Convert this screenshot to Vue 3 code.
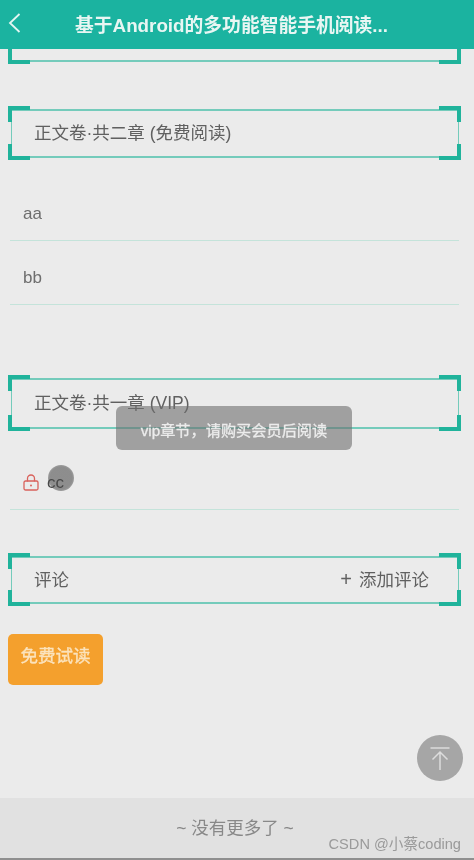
<script setup>
const boxCorners = ['tl', 'tr', 'bl', 'br']
const freeChapters = ['aa', 'bb']
</script>

<template>
  <div class="page">
    <header class="header">
      <svg class="back" width="14" height="20" viewBox="0 0 14 20">
        <path d="M11.5 1 L2 10 L11.5 19" fill="none" stroke="#e4f6f2" stroke-width="1.8" />
      </svg>
      <h1 class="title">基于Android的多功能智能手机阅读...</h1>
    </header>

    <main class="content">
      <section class="box box-clipped">
        <span v-for="c in boxCorners" :key="c" class="corner" :class="c"></span>
      </section>

      <section class="box box-free">
        <span v-for="c in boxCorners" :key="c" class="corner" :class="c"></span>
        <span class="box-label">正文卷·共二章 (免费阅读)</span>
      </section>
      <div class="rows">
        <div v-for="name in freeChapters" :key="name" class="row">{{ name }}</div>
      </div>

      <section class="box box-vip">
        <span v-for="c in boxCorners" :key="c" class="corner" :class="c"></span>
        <span class="box-label">正文卷·共一章 (VIP)</span>
      </section>
      <div class="rows rows-vip">
        <div class="row row-locked">
          <span class="touch"></span>
          <svg class="lock" width="16" height="17" viewBox="0 0 16 17">
            <path d="M4.5 7.5 V4.5 a3.5 3.5 0 0 1 7 0 V7.5" fill="none" stroke="#d9625c" stroke-width="1.3" />
            <rect x="1" y="7" width="14" height="9" rx="1.5" fill="none" stroke="#d9625c" stroke-width="1.3" />
            <circle cx="8" cy="11.5" r="1" fill="#d9625c" />
          </svg>
          <span class="locked-name">cc</span>
        </div>
      </div>

      <section class="box box-comment">
        <span v-for="c in boxCorners" :key="c" class="corner" :class="c"></span>
        <span class="box-label">评论</span>
        <span class="add"><span class="plus">+</span>添加评论</span>
      </section>

      <button class="trial">免费试读</button>

      <div class="toast">vip章节，请购买会员后阅读</div>
      <div class="totop">
        <svg width="24" height="26" viewBox="0 0 24 26">
          <path d="M2.5 3 H21.5 M12 25 V7 M4.5 14.5 L12 7 L19.5 14.5" fill="none" stroke="#dcdcdc" stroke-width="1.5" />
        </svg>
      </div>
    </main>

    <footer class="footer">
      <span class="end-note">~ 没有更多了 ~</span>
      <span class="mark">CSDN @小蔡coding</span>
    </footer>
  </div>
</template>

<style scoped>
.page {
  position: relative;
  width: 474px;
  height: 860px;
  display: flex;
  flex-direction: column;
  overflow: hidden;
  background: #ebebeb;
  color: #606060;
  font-family: "Liberation Sans", "Noto Sans CJK SC", sans-serif;
  font-size: 17.5px;
  filter: blur(0.55px);
}
.header {
  position: relative;
  z-index: 2;
  flex: none;
  box-sizing: border-box;
  height: 49px;
  padding: 0 0 3px 8px;
  background: #1bb3a0;
  display: flex;
  align-items: center;
}
.back {
  flex: none;
}
.title {
  margin: 0 0 0 53px;
  font-size: 18.8px;
  font-weight: 700;
  color: #e8f6f3;
  white-space: nowrap;
}
.content {
  position: relative;
  flex: 1;
  display: flex;
  flex-direction: column;
  align-items: flex-start;
}
.box {
  position: relative;
  flex: none;
  box-sizing: border-box;
  width: 453px;
  margin-left: 8px;
  padding: 0 32px 3px 26px;
  display: flex;
  align-items: center;
  justify-content: space-between;
}
.box::before {
  content: "";
  position: absolute;
  inset: 2.5px;
  border-style: solid;
  border-color: #74cbbb;
  border-width: 2px 1px;
}
.box-clipped {
  height: 56px;
  margin-top: -41px;
}
.box-free {
  height: 54px;
  margin-top: 42px;
}
.box-vip {
  height: 56px;
  margin-top: 70px;
}
.box-comment {
  height: 53px;
  margin-top: 43px;
}
.box-label,
.add {
  position: relative;
}
.plus {
  margin-right: 7px;
  font-size: 20px;
  font-weight: 400;
}
.corner {
  position: absolute;
  box-sizing: border-box;
  width: 22px;
  height: 16px;
  border: 0 solid #20b39b;
}
.tl { top: 0; left: 0; border-top-width: 4px; border-left-width: 4px; }
.tr { top: 0; right: 0; border-top-width: 4px; border-right-width: 4px; }
.bl { bottom: 0; left: 0; border-bottom-width: 4px; border-left-width: 4px; }
.br { bottom: 0; right: 0; border-bottom-width: 4px; border-right-width: 4px; }
.rows {
  flex: none;
  width: 449px;
  margin: 17px 0 0 10px;
}
.rows-vip {
  margin-top: 15px;
}
.row {
  box-sizing: border-box;
  height: 64px;
  padding: 27px 0 0 13px;
  line-height: 20px;
  font-size: 17px;
  color: #6e6e6e;
  border-bottom: 1.5px solid #c4e3da;
}
.row-locked {
  position: relative;
  display: flex;
  align-items: flex-start;
  gap: 8px;
  color: #484848;
}
.lock {
  position: relative;
  margin-top: 1px;
}
.locked-name {
  position: relative;
}
.touch {
  position: absolute;
  left: 38px;
  top: 19px;
  width: 26px;
  height: 26px;
  border-radius: 50%;
  background: radial-gradient(circle, rgba(125, 125, 125, 0.85) 60%, rgba(125, 125, 125, 0.35) 100%);
}
.trial {
  flex: none;
  width: 95px;
  height: 51px;
  margin: 28px 0 0 8px;
  padding: 0 0 10px;
  border: 0;
  border-radius: 5px;
  background: #f4a02d;
  color: #fbe3bd;
  font: 400 17.5px "Liberation Sans", "Noto Sans CJK SC", sans-serif;
  -webkit-text-stroke: 0.35px #fbe3bd;
}
.toast {
  position: absolute;
  left: 116px;
  top: 357px;
  width: 236px;
  height: 44px;
  border-radius: 6px;
  background: rgba(110, 110, 110, 0.6);
  color: #ececec;
  font-size: 15.2px;
  line-height: 49px;
  text-align: center;
  white-space: nowrap;
  -webkit-text-stroke: 0.3px #ececec;
}
.totop {
  position: absolute;
  left: 417px;
  top: 686px;
  width: 46px;
  height: 46px;
  border-radius: 50%;
  background: #a6a6a6;
  display: flex;
  align-items: center;
  justify-content: center;
}
.footer {
  position: relative;
  flex: none;
  box-sizing: border-box;
  height: 62px;
  padding-bottom: 4px;
  background: #e1e1e1;
  border-bottom: 2px solid #8f8f8f;
  color: #888;
  display: flex;
  align-items: center;
  justify-content: center;
}
.end-note {
  margin-left: -4px;
}
.mark {
  position: absolute;
  right: 13px;
  bottom: 5px;
  font-size: 14.6px;
  color: #9a9a9a;
}
</style>
